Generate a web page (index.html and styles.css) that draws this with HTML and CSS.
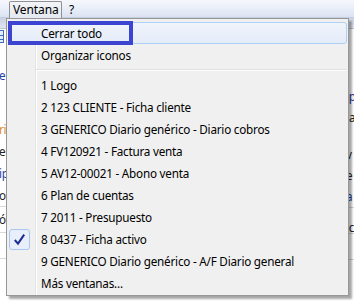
FILE: index.html
```html
<!DOCTYPE html>
<html lang="es">
<head>
<meta charset="utf-8">
<link rel="stylesheet" href="styles.css">
</head>
<body>
<div class="screen">
  <div class="menubar">
    <span class="mb-item active">Ventana</span>
    <span class="mb-item">?</span>
  </div>
  <div class="workspace">
    <div class="toolbar"></div>
    <div class="panes">
      <div class="pane pane-left">
        <div class="tbl-icon"></div>
        <div class="frag first"><span class="t-blue">er</span></div>
        <div class="frag gap-l"></div>
        <div class="frag"><span class="t-orange">ri</span></div>
        <div class="frag"><span class="t-dark">er</span></div>
        <div class="frag"><span class="t-blue">ip</span></div>
        <div class="frag"><span class="t-dark">o</span></div>
        <div class="frag line"><span class="t-dark">ó</span></div>
        <div class="frag line"></div>
        <div class="frag line"></div>
      </div>
      <div class="pane pane-right">
        <div class="frag first-r"><span class="t-blue">ip</span></div>
        <div class="frag"><span class="t-dark">:a</span></div>
        <div class="frag gap-r"></div>
        <div class="frag"><span class="t-dark">v</span></div>
        <div class="frag"><span class="t-dark">e</span></div>
        <div class="frag"><span class="t-blue">a</span></div>
        <div class="frag line"><span class="t-dark">ic</span></div>
        <div class="frag line"></div>
        <div class="frag line"></div>
      </div>
    </div>
  </div>

  <div class="menu">
    <div class="item hot"><span class="icon"></span><span class="label">Cerrar todo</span></div>
    <div class="item"><span class="icon"></span><span class="label">Organizar iconos</span></div>
    <div class="sep"></div>
    <div class="item"><span class="icon"></span><span class="label">1 Logo</span></div>
    <div class="item"><span class="icon"></span><span class="label">2 123 CLIENTE - Ficha cliente</span></div>
    <div class="item"><span class="icon"></span><span class="label">3 GENERICO Diario genérico - Diario cobros</span></div>
    <div class="item"><span class="icon"></span><span class="label">4 FV120921 - Factura venta</span></div>
    <div class="item"><span class="icon"></span><span class="label">5 AV12-00021 - Abono venta</span></div>
    <div class="item"><span class="icon"></span><span class="label">6 Plan de cuentas</span></div>
    <div class="item"><span class="icon"></span><span class="label">7 2011 - Presupuesto</span></div>
    <div class="item"><span class="icon checked"><svg width="13" height="13" viewBox="0 0 13 13"><path d="M1.8 7 L5 10.6 L11.2 1.6" fill="none" stroke="#1c2a93" stroke-width="2"/></svg></span><span class="label">8 0437 - Ficha activo</span></div>
    <div class="item"><span class="icon"></span><span class="label">9 GENERICO Diario genérico - A/F Diario general</span></div>
    <div class="item"><span class="icon"></span><span class="label">Más ventanas...</span></div>
  </div>
  <div class="annot"></div>
</div>
</body>
</html>
```

FILE: styles.css
```css
html, body {
  margin: 0;
  padding: 0;
}
body {
  width: 354px;
  height: 301px;
  overflow: hidden;
  font-family: "Noto Sans", "Open Sans", sans-serif;
  font-size: 11.7px;
  letter-spacing: -0.22px;
  color: #000;
  background: #fff;
}
.screen {
  position: relative;
  width: 354px;
  height: 301px;
  overflow: hidden;
}
.menubar {
  height: 18px;
  display: flex;
  align-items: flex-start;
  background: linear-gradient(to bottom, #f5f7fc 0%, #e9eef8 50%, #dbe2f1 100%);
  border-bottom: 1px solid #c5cede;
  box-sizing: border-box;
  font-size: 12px;
  letter-spacing: -0.1px;
}
.mb-item {
  height: 17px;
  line-height: 15px;
  margin-top: 1px;
  box-sizing: border-box;
  border: 1px solid transparent;
}
.mb-item.active {
  margin-left: 9px;
  width: 53px;
  padding: 0 3px;
  border: 1px solid #8f9194;
  border-bottom: none;
  border-radius: 2px 2px 0 0;
  background: linear-gradient(to bottom, #f2f4f8, #e4e8f0);
}
.mb-item:not(.active) {
  margin-left: 6px;
}
.workspace {
  height: 283px;
  display: flex;
  flex-direction: column;
}
.toolbar {
  height: 10px;
  background: linear-gradient(to bottom, #c9d2e4, #dfe5f1);
  border-bottom: 1px solid #b9c3d6;
}
.panes {
  flex: 1;
  display: flex;
  justify-content: space-between;
}
.pane {
  width: 8px;
  overflow: hidden;
  line-height: 20px;
}
.pane-left {
  width: 6px;
}
.tbl-icon {
  width: 6px;
  height: 13px;
  margin-top: 1px;
  margin-left: -2px;
  box-sizing: border-box;
  border: 1px solid #3c6cc0;
  background:
    linear-gradient(to bottom, transparent 4px, #3c6cc0 4px, #3c6cc0 5px, transparent 5px, transparent 8px, #3c6cc0 8px, #3c6cc0 9px, transparent 9px),
    #e6eefa;
}
.frag {
  height: 22px;
  line-height: 22px;
  white-space: nowrap;
  margin-left: -1px;
}
.frag.first {
  margin-top: 22px;
  height: 20px;
  line-height: 20px;
}
.frag.gap-l {
  height: 33px;
}
.frag.line {
  border-top: 1px solid #d8d8d8;
  height: 25px;
}
.frag.first-r {
  margin-top: 57px;
  height: 21px;
}
.frag.gap-r {
  height: 16px;
}
.pane-right .frag {
  margin-left: 0;
  height: 21px;
  line-height: 21px;
}
.pane-right .frag.gap-r {
  height: 16px;
}
.pane-right .frag.line {
  height: 25px;
  line-height: 38px;
}
.pane-left .frag.line {
  line-height: 24px;
}
.t-blue { color: #1d3ea4; }
.t-orange { color: #d88a1c; }
.t-dark { color: #222; }

.menu {
  position: absolute;
  left: 6px;
  top: 18px;
  width: 343px;
  height: 278px;
  box-sizing: border-box;
  border: 1px solid #979797;
  padding: 3px 1px 3px 1px;
  background:
    linear-gradient(to right, transparent 28px, #e2e3e3 28px, #e2e3e3 29px, #ffffff 29px, #ffffff 30px, transparent 30px),
    #f0f0f0;
  box-shadow: 3px 3px 2px rgba(0, 0, 0, 0.35);
}
.item {
  height: 22px;
  display: flex;
  align-items: center;
  margin-left: 1px;
  box-sizing: border-box;
  border: 1px solid transparent;
  border-radius: 3px;
}
.item.hot {
  border-color: #aecff7;
  background: linear-gradient(to bottom, #f0f4fb, #e4ecf8);
}
.icon {
  width: 21px;
  height: 21px;
  flex: none;
  margin-left: -1px;
  display: flex;
  align-items: center;
  justify-content: center;
  box-sizing: border-box;
  border-radius: 3px;
}
.icon.checked {
  border: 1px solid #a9c6ef;
  background: #e8effa;
}
.label {
  margin-left: 11px;
  white-space: nowrap;
  line-height: 20px;
}
.sep {
  height: 8px;
  margin-left: 28px;
  margin-right: 1px;
  background: linear-gradient(to bottom, transparent 3px, #e0e0e0 3px, #e0e0e0 4px, #ffffff 4px, #ffffff 5px, transparent 5px);
}
.annot {
  position: absolute;
  left: 8px;
  top: 21px;
  width: 125px;
  height: 24px;
  box-sizing: border-box;
  border: 4px solid #3b45d2;
}
```
